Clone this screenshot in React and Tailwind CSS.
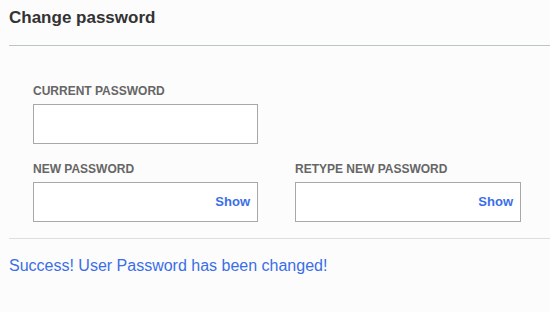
import React, { useState } from 'react';

const Field = ({ label, withShow, width = 'w-[225px]' }) => {
  const [show, setShow] = useState(false);
  return (
    <div className={`flex flex-col ${width}`}>
      <label className="text-[12px] font-bold text-[#666] uppercase leading-[14px] mb-[6px]">{label}</label>
      <div className="relative h-[40px] border border-[#a8a8a8] bg-white">
        <input
          type={show ? 'text' : 'password'}
          className="w-full h-full px-2 outline-none bg-transparent text-sm"
        />
        {withShow && (
          <button
            onClick={() => setShow(!show)}
            className="absolute right-[7px] top-[12px] text-[13px] font-bold text-[#3a6ee8] leading-[14px]"
          >
            Show
          </button>
        )}
      </div>
    </div>
  );
};

const App = () => {
  return (
    <div className="w-[550px] h-[312px] bg-[#fcfcfc] pl-[9px] font-['Liberation_Sans',Arial,sans-serif]">
      <h2 className="text-[17px] font-bold text-[#333] pt-[8px] leading-[20px] h-[45px]">Change password</h2>
      <div className="border-t border-[#b9c6c2]" />
      <div className="pl-[24px] pt-[38px] flex flex-col gap-[18px]">
        <Field label="Current password" />
        <div className="flex gap-[37px]">
          <Field label="New password" withShow />
          <Field label="Retype new password" withShow width="w-[226px]" />
        </div>
      </div>
      <div className="border-t border-[#dedede] mt-[16px]" />
      <p className="text-[16px] text-[#3a6ee8] mt-[17px] leading-[20px]">Success! User Password has been changed!</p>
    </div>
  );
};

export default App;
